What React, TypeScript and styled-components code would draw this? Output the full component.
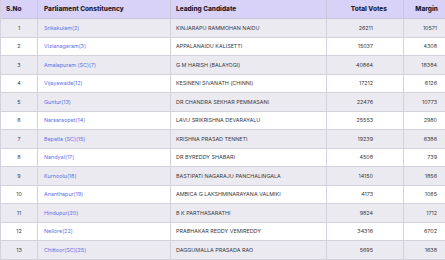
import React from "react";
import styled, { createGlobalStyle } from "styled-components";

const Global = createGlobalStyle`
  html, body { margin: 0; padding: 0; background: #ffffff; overflow: hidden; }
  body { font-family: Inter, "Noto Sans", sans-serif; }
`;

const COLS = "37px 133px 156px 77px 1fr";

const Table = styled.div`
  width: 445px;
  display: flex;
  flex-direction: column;
  font-family: Inter, "Noto Sans", sans-serif;
  border-left: 1px solid #d3d1dc;
  box-sizing: border-box;
`;

const HeadRow = styled.div`
  display: grid;
  grid-template-columns: ${COLS};
  height: 19px;
  background: #d9d2f8;
  border-bottom: 1px solid #c9c6d8;
  box-sizing: border-box;
`;

const Row = styled.div<{ $odd: boolean }>`
  display: grid;
  grid-template-columns: ${COLS};
  height: 18.5px;
  background: ${(p) => (p.$odd ? "#ebeaf1" : "#ffffff")};
  border-bottom: 1px solid #d3d1dc;
  box-sizing: border-box;
`;

const Cell = styled.div<{ $align?: "left" | "center" | "right"; $padL?: number; $padR?: number }>`
  display: flex;
  align-items: center;
  justify-content: ${(p) =>
    p.$align === "right" ? "flex-end" : p.$align === "center" ? "center" : "flex-start"};
  padding: 0 ${(p) => p.$padR ?? 0}px 0 ${(p) => p.$padL ?? 0}px;
  border-right: 1px solid #d3d1dc;
  box-sizing: border-box;
  white-space: nowrap;
  overflow: hidden;
  min-width: 0;
  &:last-child {
    border-right: none;
  }
`;

const HeadCell = styled(Cell)`
  border-right-color: #c9c6d8;
  font-size: 6.5px;
  font-weight: 800;
  color: #1d1b2e;
`;

const BodyCell = styled(Cell)`
  font-size: 5.4px;
  color: #3a3a44;
`;

const Link = styled.span`
  color: #5f72e6;
`;

const rows: [string, string, number, number][] = [
  ["Srikakulam(2)", "KINJARAPU RAMMOHAN NAIDU", 26211, 10571],
  ["Vizianagaram(3)", "APPALANAIDU KALISETTI", 15037, 4308],
  ["Amalapuram (SC)(7)", "G M HARISH (BALAYOGI)", 40864, 18384],
  ["Vijayawada(12)", "KESINENI SIVANATH (CHINNI)", 17212, 6126],
  ["Guntur(13)", "DR CHANDRA SEKHAR PEMMASANI", 22476, 10773],
  ["Narsaraopet(14)", "LAVU SRIKRISHNA DEVARAYALU", 25553, 2980],
  ["Bapatla (SC)(15)", "KRISHNA PRASAD TENNETI", 19239, 6386],
  ["Nandyal(17)", "DR BYREDDY SHABARI", 4508, 739],
  ["Kurnoolu(18)", "BASTIPATI NAGARAJU PANCHALINGALA", 14150, 1856],
  ["Ananthapur(19)", "AMBICA G LAKSHMINARAYANA VALMIKI", 4173, 1065],
  ["Hindupur(20)", "B K PARTHASARATHI", 9824, 1712],
  ["Nellore(22)", "PRABHAKAR REDDY VEMIREDDY", 34316, 6702],
  ["Chittoor(SC)(25)", "DAGGUMALLA PRASADA RAO", 5695, 1638],
];

export default function App() {
  return (
    <>
      <Global />
      <Table>
        <HeadRow>
          <HeadCell $padL={5}>S.No</HeadCell>
          <HeadCell $padL={6}>Parliament Constituency</HeadCell>
          <HeadCell $padL={5}>Leading Candidate</HeadCell>
          <HeadCell $align="right" $padR={16}>Total Votes</HeadCell>
          <HeadCell $align="right" $padR={7}>Margin</HeadCell>
        </HeadRow>
        {rows.map((r, i) => (
          <Row key={i} $odd={i % 2 === 0}>
            <BodyCell $align="center">{i + 1}</BodyCell>
            <BodyCell $padL={6}>
              <Link>{r[0]}</Link>
            </BodyCell>
            <BodyCell $padL={5}>{r[1]}</BodyCell>
            <BodyCell $align="right" $padR={30}>{r[2]}</BodyCell>
            <BodyCell $align="right" $padR={8}>{r[3]}</BodyCell>
          </Row>
        ))}
      </Table>
    </>
  );
}
